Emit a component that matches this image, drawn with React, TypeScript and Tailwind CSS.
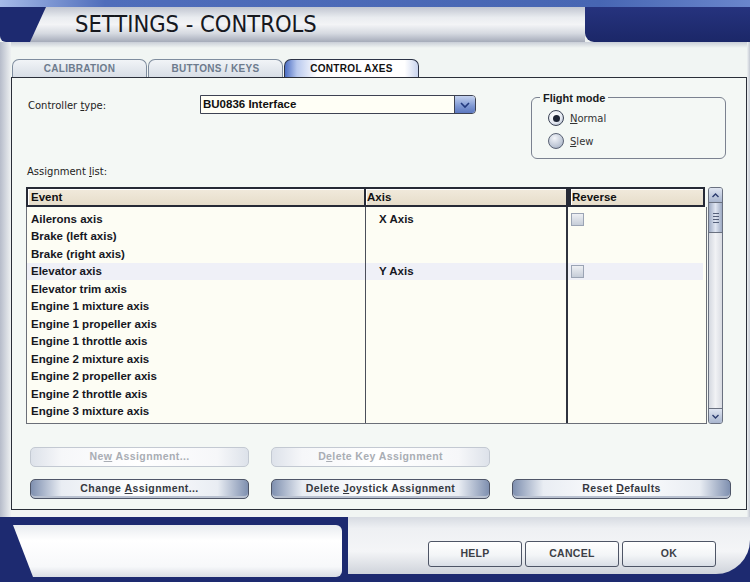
import React from 'react';

type Row = { event: string; axis?: string; check?: boolean; hl?: boolean };

const rows: Row[] = [
  { event: 'Ailerons axis', axis: 'X Axis', check: true },
  { event: 'Brake (left axis)' },
  { event: 'Brake (right axis)' },
  { event: 'Elevator axis', axis: 'Y Axis', check: true, hl: true },
  { event: 'Elevator trim axis' },
  { event: 'Engine 1 mixture axis' },
  { event: 'Engine 1 propeller axis' },
  { event: 'Engine 1 throttle axis' },
  { event: 'Engine 2 mixture axis' },
  { event: 'Engine 2 propeller axis' },
  { event: 'Engine 2 throttle axis' },
  { event: 'Engine 3 mixture axis' },
];

const Tab = ({ label, active }: { label: string; active?: boolean }) => (
  <div
    className={
      active
        ? 'w-[135px] h-[18px] rounded-t-[7px] border border-b-0 border-[#2c3346] bg-[linear-gradient(to_right,#4b6dc2_0%,#b9c9ee_9%,#ffffff_24%,#ffffff_90%,#c9d4ee_100%)] flex items-center justify-center text-[10px] tracking-[0.3px] font-bold text-[#111]'
        : 'w-[135px] h-[18px] rounded-t-[7px] border border-b-0 border-[#7e8c9e] bg-[linear-gradient(to_bottom,#f1f4f7,#d8dee6)] flex items-center justify-center text-[10px] tracking-[0.3px] font-bold text-[#6d7b8d]'
    }
  >
    {label}
  </div>
);

const Btn = ({ children, disabled }: { children: React.ReactNode; disabled?: boolean }) => (
  <div
    className={
      disabled
        ? 'w-[219px] h-[20px] rounded-[5px] border border-[#c3c9d2] bg-[linear-gradient(to_right,#dde2ea_0%,#f6f7f9_14%,#ffffff_50%,#f6f7f9_86%,#dde2ea_100%)] flex items-center justify-center text-[10.5px] tracking-[0.4px] font-bold text-[#a9adb4]'
        : 'w-[219px] h-[20px] rounded-[5px] border border-[#4f5668] bg-[linear-gradient(to_right,#7f90b0_0%,#e9edf3_14%,#ffffff_50%,#e9edf3_86%,#7f90b0_100%)] shadow-[inset_0_-2px_0_#b9c1d0] flex items-center justify-center text-[10.5px] tracking-[0.4px] font-bold text-[#35383f]'
    }
  >
    {children}
  </div>
);

const FootBtn = ({ label }: { label: string }) => (
  <div className="w-[94px] h-[26px] rounded-[3px] border border-[#4e5566] bg-[linear-gradient(to_bottom,#ffffff,#f3f5f7_55%,#d9dee6)] flex items-center justify-center text-[10.5px] tracking-[0.3px] font-bold text-[#3c3f46]">
    {label}
  </div>
);

const Radio = ({ checked }: { checked?: boolean }) => (
  <span
    className={
      checked
        ? 'w-[16px] h-[16px] rounded-full border border-[#3c4456] bg-[radial-gradient(circle_at_40%_35%,#ffffff,#e6eaf2_55%,#9aa6bc)] flex items-center justify-center'
        : 'w-[16px] h-[16px] rounded-full border border-[#5a6274] bg-[radial-gradient(circle_at_40%_30%,#f4f6fa,#bcc5d4_65%,#8f9bb2)]'
    }
  >
    {checked && <span className="w-[7px] h-[7px] rounded-full bg-[#1d2434]" />}
  </span>
);

const Check = () => (
  <span className="block w-[13px] h-[13px] border border-[#9ba4b4] bg-[linear-gradient(to_bottom,#eef0f4,#c6cdd8)]" />
);

export default function App() {
  return (
    <div className="w-[750px] h-[582px] overflow-hidden flex flex-col bg-[#1d2a70] font-['Liberation_Sans',Arial,sans-serif]">
      {/* Title */}
      <div className="h-[7px] bg-[linear-gradient(to_right,#a6bbe8,#4f6dbb_14%,#4766b3_80%,#6a86cc)]" />
      <div className="h-[35px] flex bg-[#eef2f2]">
        <div className="w-[585px] h-full bg-[#1d2a70] rounded-bl-[6px] pl-[30px]">
          <div className="h-full [clip-path:polygon(16px_0,100%_0,100%_100%,0_100%)] rounded-tl-[4px] bg-[linear-gradient(to_bottom,#c1c6d1_0%,#e9ecf0_30%,#f3f4f6_50%,#d6dae1_75%,#a5abb9_100%)] flex items-center pl-[45px]">
            <span className="text-[23.5px] text-[#16181e] font-['DejaVu_Sans_Condensed','DejaVu_Sans',sans-serif] [font-stretch:semi-condensed]">
              SETTINGS - CONTROLS
            </span>
          </div>
        </div>
        <div className="flex-1 h-full bg-[linear-gradient(to_bottom,#26337e,#1b2768)] rounded-bl-[9px]" />
      </div>

      {/* Body */}
      <div className="h-[475px] flex bg-[linear-gradient(to_bottom,#c9ced7,#f1f5f3_6px)]">
        <div className="w-[11px] bg-[linear-gradient(to_right,#b6bcca,#eef1f2)]" />
        <div className="w-[736px] flex flex-col pt-[17px]">
          <div className="flex h-[18px] ml-[1px] gap-[1px]">
            <Tab label="CALIBRATION" />
            <Tab label="BUTTONS / KEYS" />
            <Tab label="CONTROL AXES" active />
          </div>
          <div className="h-[433px] border border-[#2a2e38] bg-[#f4f8f5] pt-[17px] pl-[14px] flex flex-col">
            {/* Controller type + flight mode */}
            <div className="h-[64px] flex items-start">
              <div className="w-[174px] h-[20px] pl-[2px] flex items-center text-[10px] text-[#222] font-['DejaVu_Sans',sans-serif]">
                Controller&nbsp;<span className="underline">t</span>ype:
              </div>
              <div className="w-[276px] h-[19px] flex rounded-r-[4px] border border-[#3d4252] bg-[#fffff6]">
                <div className="flex-1 flex items-center pl-[2px] pt-[1px] text-[11.5px] font-bold text-[#111] border-r border-[#3d4252]">
                  BU0836 Interface
                </div>
                <div className="w-[20px] h-full rounded-r-[3px] bg-[linear-gradient(to_bottom,#c4d2ef,#7d97d2_60%,#5c78c0)] flex items-center justify-center">
                  <svg width="12" height="10" viewBox="0 0 12 10">
                    <polyline points="2,3 6,7 10,3" fill="none" stroke="#22397e" strokeWidth="1.6" />
                  </svg>
                </div>
              </div>
              <div className="ml-[55px] mt-[2px] w-[195px] h-[62px] rounded-[6px] border border-[#7b8290] relative pl-[16px] pt-[12px] flex flex-col gap-[7px]">
                <span className="absolute -top-[8px] left-[8px] px-[3px] bg-[#f4f8f5] text-[11px] font-bold text-[#1a1c22]">
                  Flight mode
                </span>
                <div className="flex items-center gap-[6px] text-[10px] text-[#333] font-['DejaVu_Sans',sans-serif]">
                  <Radio checked />
                  <span>
                    <span className="underline">N</span>ormal
                  </span>
                </div>
                <div className="flex items-center gap-[6px] text-[10px] text-[#333] font-['DejaVu_Sans',sans-serif]">
                  <Radio />
                  <span>
                    <span className="underline">S</span>lew
                  </span>
                </div>
              </div>
            </div>

            <div className="mt-[5px] h-[14px] pl-[1px] flex items-center text-[10px] text-[#222] font-['DejaVu_Sans',sans-serif]">
              Assignment&nbsp;<span className="underline">l</span>ist:
            </div>

            {/* Table */}
            <div className="mt-[9px] h-[237px] flex">
              <div className="w-[681px] flex flex-col">
                <div className="h-[20px] flex text-[11.5px] font-bold text-[#111]">
                  <div className="w-[340px] border-2 border-[#262a36] bg-[linear-gradient(to_bottom,#f1eadc,#e6ddca)] shadow-[inset_1px_1px_0_#fff] flex items-center pl-[3px] pt-[1px]">
                    Event
                  </div>
                  <div className="w-[202px] border-2 border-l-0 border-[#262a36] bg-[linear-gradient(to_bottom,#f1eadc,#e6ddca)] shadow-[inset_1px_1px_0_#fff] flex items-center pl-[1px] pt-[1px]">
                    Axis
                  </div>
                  <div className="w-[137px] border-2 border-l-[3px] border-[#262a36] bg-[linear-gradient(to_bottom,#f1eadc,#e6ddca)] shadow-[inset_1px_1px_0_#fff] flex items-center pl-[1px] pt-[1px]">
                    Reverse
                  </div>
                </div>
                <div className="h-[217px] flex border-l border-b border-r border-[#6b6f78] bg-[#fdfdf4] text-[11.5px] font-bold text-[#16171f]">
                  <div className="w-[339px] border-r border-[#4b4f5a] pt-[3px]">
                    {rows.map((r) => (
                      <div key={r.event} className={`h-[17.5px] flex items-center pl-[4px] pt-[1px] ${r.hl ? 'bg-[#eff0f7]' : ''}`}>
                        {r.event}
                      </div>
                    ))}
                  </div>
                  <div className="w-[202px] border-r-2 border-[#2f333e] pt-[3px]">
                    {rows.map((r) => (
                      <div key={r.event} className={`h-[17.5px] flex items-center pl-[13px] pt-[1px] ${r.hl ? 'bg-[#eff0f7]' : ''}`}>
                        {r.axis ?? ''}
                      </div>
                    ))}
                  </div>
                  <div className="flex-1 pt-[3px] pr-[3px]">
                    {rows.map((r) => (
                      <div key={r.event} className={`h-[17.5px] flex items-center pl-[3px] pt-[1px] ${r.hl ? 'bg-[#eff0f7]' : ''}`}>
                        {r.check && <Check />}
                      </div>
                    ))}
                  </div>
                </div>
              </div>
              {/* Scrollbar */}
              <div className="ml-[1px] w-[15px] h-full flex flex-col rounded-[3px] border border-[#6a7180] bg-[linear-gradient(to_right,#d4d8e0,#f1f2f5_50%,#d9dce3)]">
                <div className="h-[15px] rounded-t-[2px] bg-[linear-gradient(to_bottom,#dfe5f1,#a9b6cf)] border-b border-[#6a7180] flex items-center justify-center">
                  <svg width="9" height="7" viewBox="0 0 9 7">
                    <polyline points="1.5,5 4.5,2 7.5,5" fill="none" stroke="#2c3c6e" strokeWidth="1.4" />
                  </svg>
                </div>
                <div className="h-[30px] bg-[linear-gradient(to_right,#9eabc4,#dfe5f1_50%,#9eabc4)] border-b border-[#6a7180] flex flex-col items-center justify-center gap-[2px]">
                  <span className="w-[6px] h-[1px] bg-[#55607a]" />
                  <span className="w-[6px] h-[1px] bg-[#55607a]" />
                  <span className="w-[6px] h-[1px] bg-[#55607a]" />
                  <span className="w-[6px] h-[1px] bg-[#55607a]" />
                </div>
                <div className="flex-1" />
                <div className="h-[15px] rounded-b-[2px] bg-[linear-gradient(to_bottom,#dfe5f1,#a9b6cf)] border-t border-[#6a7180] flex items-center justify-center">
                  <svg width="9" height="7" viewBox="0 0 9 7">
                    <polyline points="1.5,2 4.5,5 7.5,2" fill="none" stroke="#2c3c6e" strokeWidth="1.4" />
                  </svg>
                </div>
              </div>
            </div>

            {/* Buttons */}
            <div className="mt-[23px] ml-[4px] flex gap-[22px]">
              <Btn disabled>
                Ne<span className="underline">w</span>&nbsp;Assignment...
              </Btn>
              <Btn disabled>
                D<span className="underline">e</span>lete Key Assignment
              </Btn>
            </div>
            <div className="mt-[12px] ml-[4px] flex gap-[22px]">
              <Btn>
                Change&nbsp;<span className="underline">A</span>ssignment...
              </Btn>
              <Btn>
                Delete&nbsp;<span className="underline">J</span>oystick Assignment
              </Btn>
              <Btn>
                Reset&nbsp;<span className="underline">D</span>efaults
              </Btn>
            </div>
          </div>
        </div>
        <div className="w-[3px] bg-[linear-gradient(to_right,#eef1f2,#c3c8d2)]" />
      </div>

      {/* Footer */}
      <div className="flex-1 flex">
        <div className="w-[342px] pt-[8px] pl-[13px]">
          <div className="h-[52px] rounded-r-[6px] [clip-path:polygon(0_0,100%_0,100%_100%,20px_100%)] bg-[linear-gradient(to_bottom,#e9ecf0,#ffffff_30%,#f7f8fa_80%,#d9dde4)]" />
        </div>
        <div className="ml-[6px] flex-1 h-[57px] rounded-br-[34px] bg-[linear-gradient(to_bottom,#d7dbe2,#eef0f3_20%,#f4f5f7_60%,#cfd3db)] flex justify-end items-start gap-[3px] pt-[24px] pr-[34px]">
          <FootBtn label="HELP" />
          <FootBtn label="CANCEL" />
          <FootBtn label="OK" />
        </div>
      </div>
    </div>
  );
}
